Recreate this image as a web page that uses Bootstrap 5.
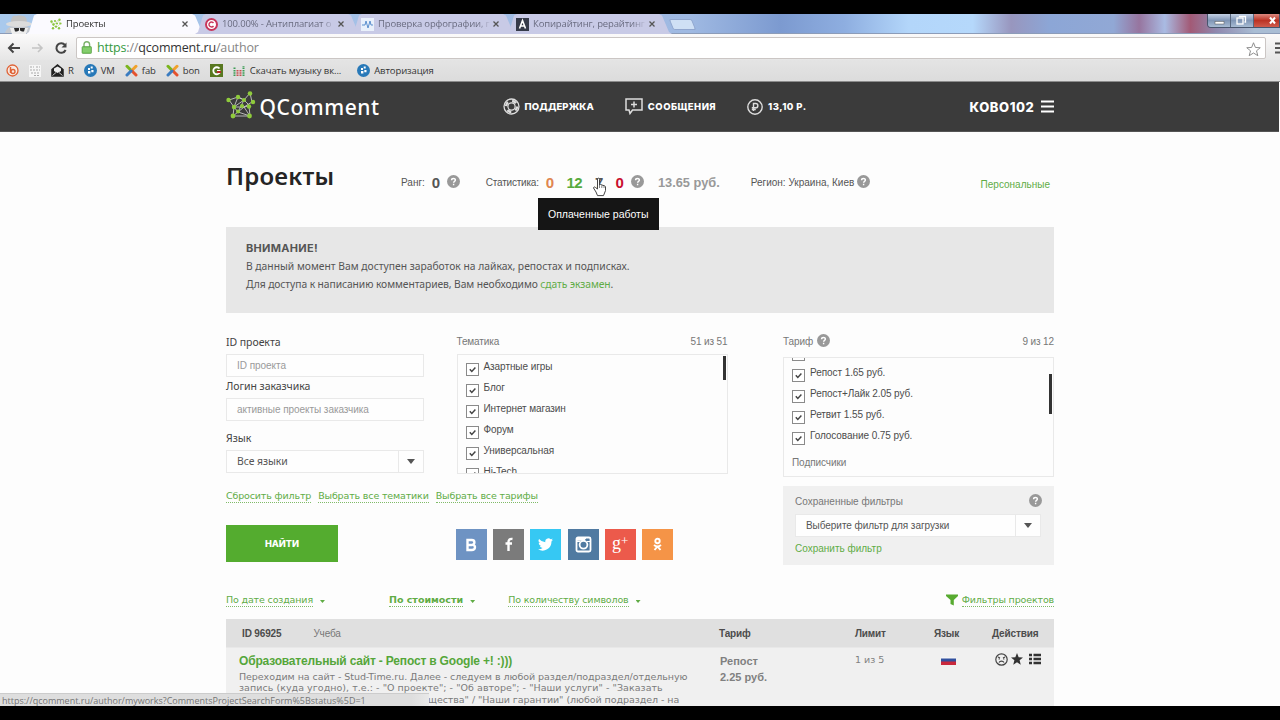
<!DOCTYPE html>
<html lang="ru">
<head>
<meta charset="utf-8">
<title>Проекты</title>
<meta name="viewport" content="width=device-width, initial-scale=1">
<link href="https://cdn.jsdelivr.net/npm/bootstrap@5.3.0/dist/css/bootstrap.min.css" rel="stylesheet">
<style>
body{width:1280px;height:720px;overflow:hidden;background:#000;font:10px/16px "Liberation Sans",sans-serif;color:#555;padding:14px 0}
svg{display:block;flex:none}
span,a,label,h1{white-space:nowrap}
a,a:hover{color:#60ac45;text-decoration:none}
.screen{height:692px;background:#fdfdfd;overflow:hidden}
.ui{font-family:"Open Sans","Noto Sans",sans-serif}
.wide{font-family:"DejaVu Sans",sans-serif;font-size:9.5px}
.geo{font-family:"Noto Sans",sans-serif}
.cap{font-family:Inter,sans-serif;font-weight:800}
/* browser chrome */
.strip{height:20px;background:linear-gradient(90deg,#a9c9ec 0,#9fb9e2 54%,#7c9ad0 61%,#8eaee0 66%,#b3d6fa 71%,#b5d8fb 76%,#9896be 79%,#8ca6d6 82%,#91a8d5 87%,#97759f 89%,#a9bbe3 91%,#a25a76 93%,#8f88ae 95%,#a9bdd4 98%);border-bottom:1px solid #8c9cb8}
.tabx{width:165px;height:20px;margin-left:-10px;padding:0 17px 0 10px;font-size:9.5px;letter-spacing:-.15px;line-height:20px;background:#c8cae6;color:#6a6c80;clip-path:polygon(0 100%,3px 90%,8px 8%,11px 0,calc(100% - 13px) 0,calc(100% - 10px) 8%,calc(100% - 3px) 90%,100% 100%)}
.tabx.t2,.tabx.t4{width:166px}
.tabx.on{width:179px;padding-left:20px;background:#fbfaff;color:#333}
.tabx span{width:113px;overflow:hidden;-webkit-mask-image:linear-gradient(90deg,#000 88%,transparent);mask-image:linear-gradient(90deg,#000 88%,transparent)}
.newtab{width:23px;height:11px;margin:5px 0 0 -1px;background:#cfe0f5;border:1px solid #91a7cf;border-radius:2px;transform:skewX(22deg)}
.winbtns{width:73px;height:14px;border:1px solid #47556d;border-top:0;border-radius:0 0 0 4px;overflow:hidden}
.winbtns div{width:23px;background:linear-gradient(#c3d0e3,#8096b6 50%,#a7bbd3);border-right:1px solid #58677f}
.winbtns div:last-child{width:27px;background:linear-gradient(#dc8a80,#bb3324 50%,#cf5b4c)}
.toolbar{height:26px;background:linear-gradient(#fbfafa,#e6e6e6);padding-left:7px}
.addr{width:1190px;height:22px;margin-top:3px;background:#fff;border:1px solid #cbc6c4;border-radius:2px;font-size:12.5px;letter-spacing:-.17px;line-height:19px;color:#858585}
.addr i{font-style:normal;color:#359a3d}
.addr em{font-style:normal;color:#333}
.marks{height:22px;background:linear-gradient(#e4e4e4,#dcdcdc);border-bottom:1px solid #8b8b8b;font-size:9.5px;letter-spacing:-.1px;line-height:21px;color:#333;padding-left:6px}
.marks svg{margin-left:10px}
.marks svg:first-child{margin-left:0}
.marks span{margin-left:4px}
/* site header */
.top{height:50px;background:#3b3b3b;color:#fff;border-bottom:1px solid #555;width:1279px}
.top>div{height:49px;width:828px}
.brand{font-size:21px;margin-left:4px;font-weight:500;letter-spacing:.55px}
.sign{margin-top:-3px}
.nav1{margin-left:123px}.nav2{margin-left:31px}
.navt{font-size:9.5px;margin-left:5px;letter-spacing:.1px}
.navt.sp{letter-spacing:.45px}
.user{font-size:13px;letter-spacing:.6px;margin-right:6px}
/* page */
.page{width:828px}
.headrow{height:95px}
.ttl{font-size:24px;line-height:30px;margin:29px 0 0;font-weight:600;color:#252525;letter-spacing:.2px;width:109px}
.stats{margin:41px 0 0 66px;height:20px;line-height:20px}
.stats svg{margin:2px 0 0 7.5px}
.stats .num{font-weight:700;font-size:15px;letter-spacing:-.5px;margin-left:7px}
.stats .num.n2{margin-left:12.8px}
.stats .sum{font-weight:700;font-size:12.8px;margin-left:14px;color:#999}
.st2{margin-left:25.5px;letter-spacing:-.2px}
.reg{margin-left:31px}
.stats .reg+svg{margin-left:2.5px}
.pers{margin:45px 4px 0 0}
.tip{left:312px;top:66px;width:121px;height:32px;line-height:32px;background:#151515;color:#fff;padding-left:10px;z-index:2;font-size:10.5px}
.hand{left:366px;top:44px;z-index:3}
.notice{height:86px;background:#e7e7e7;padding:12px 20px;line-height:18px;font-size:10.3px}
.notice b{font-weight:700;font-size:11px;letter-spacing:.3px}
.tight{letter-spacing:-.08px}
.filters{height:280px}
.lefta{width:557px}
.uprow{height:174px;padding-top:21px}
.col1{width:198px;margin-right:32.5px;color:#444;font-size:10.5px;letter-spacing:-.05px}
.col1 label{display:table;margin:0 0 4px}
.col1 label.l2{margin-top:1px}.col1 label.l3{margin-top:9px}
.field{width:198px;height:23px;border:1px solid #e9e9e9;background:#fefefe;padding:0 10px;line-height:21px;color:#9a9a9a;font:10px/21px "Liberation Sans",sans-serif;letter-spacing:-.05px}
.pick{padding-right:0;color:#555}
.col1 .pick{font-family:"Noto Sans",sans-serif;font-size:10.4px}
.wfull{width:246px;margin:4px 0}
.arrow{width:25px;border-left:1px solid #e9e9e9;display:flex;align-items:center;justify-content:center}
.arrow::before{content:"";border:4.5px solid transparent;border-top:5px solid #555;border-bottom:0}
.dn{width:5px;height:3px;margin:6px 0 0 7px;background:#60ac45;clip-path:polygon(0 0,100% 0,50% 100%)}
.cols{width:271px}
.cap-row{color:#777;letter-spacing:-.12px}
.listbox{width:271px;height:120px;border:1px solid #e9e9e9;overflow:hidden;position:relative;color:#4c4c4c;padding:0 8px;letter-spacing:-.07px}
.listbox .item{height:21px}
.bx{width:13px;height:13px;border:1px solid #8a8a8a;background:#fff;flex:none;margin:4px 5px 0 0}
.thumb{position:absolute;right:1px;top:1px;width:3px;height:24px;background:#333}
.thumb.th2{top:16px;height:40px}
.pull{margin-top:-14px}
.grp{display:table;margin-top:6px;color:#777}
.links{height:38px;padding-top:3px;gap:7px}
.lnk{border-bottom:1px dotted #7fbb68;line-height:12px;height:13px;letter-spacing:-.15px}
.find{width:112px;height:37px;border-radius:0;background:#54ac2f;border:0;color:#fff;font-size:9.2px;padding:0}
.socs{margin:4px 0 0 118px;gap:6.2px}
.soc{width:31px;height:31px;display:flex;align-items:center;justify-content:center}
.vk{background:#6e93c3}.fb{background:#7b7b7b}.tw{background:#36c8f3}.ig{background:#507aa1}.ok{background:#f59447}
.gp{background:#ec5a4b;color:#fff;font:18px/18px "Liberation Serif",serif}
.gp span{margin-top:-3px}
.gp sup{font-size:13px;top:-4px}
.saved{width:271px;height:79px;margin-top:9px;background:#f0f0f0;padding:8px 12px;color:#777}
.sort{height:26px;padding-top:1px}
.s2{margin-left:64px;letter-spacing:0}.s3{margin-left:33px}
.thead-x{height:29px;background:#e0e0e0;line-height:29px;font-weight:700;color:#4c4c4c;border-bottom:1px solid #e8e8e8;letter-spacing:-.15px}
.cat{margin-left:32px;font-weight:400;color:#777}
.grid{display:grid;grid-template-columns:493px 136px 79px 58px auto}
.rowx{height:58px;background:#f0f0f0;color:#808080}
.job{display:table;font-weight:700;font-size:12px;letter-spacing:-.18px;color:#55a63a}
.desc{line-height:11.5px;color:#7b7b7b;padding-top:1.5px;letter-spacing:-.06px}
.desc .d2{letter-spacing:.04px}
.desc .d3{margin-left:189px}
.price{padding:5px 1px;font-weight:700;font-size:11px}
.flag{margin:9px 0 0 7px}
.status{left:0;bottom:14px;width:429px;height:13px;background:linear-gradient(90deg,#dedede 96%,#e9e9e9);border-top:1px solid #ccc;font-size:9px;line-height:13px;color:#757575;padding-left:2px;z-index:3}
</style>
</head>
<body>
<svg width="0" height="0" class="position-absolute">
<symbol id="q" viewBox="0 0 13 13"><circle cx="6.500" cy="6.500" r="6.500" fill="#999"/><path d="M4.600 5.200C4.600 2.900 8.400 3 8.400 5.100 8.400 6.400 6.600 6.400 6.600 7.800M6.600 8.800v1.400" stroke="#fff" stroke-width="1.400" fill="none"/></symbol>
<symbol id="ck" viewBox="0 0 11 11"><path d="M2.800 5.300 4.800 7.400 8.400 3.600" fill="none" stroke="#444" stroke-width="1.500"/></symbol>
<symbol id="x" viewBox="0 0 6 6"><path d="M.5.5l5 5M5.500.5l-5 5" stroke="#555" stroke-width="1.300"/></symbol>
<symbol id="logo" viewBox="0 0 30 28"><g stroke="#d8d8d8" stroke-width=".8" fill="none"><path d="M3 9l9-3 6 3 6-7 2 9-8 5-6 5-4-5 10 0M3 9l5 7 4-10 6 3-10 7-1 9h17l-1-10-5 1 6 9M12 21l6-12 6 6M7 25l5-4 12 4"/></g><g fill="#8fcb3c"><circle cx="2.500" cy="9" r="2.200"/><circle cx="12" cy="6" r="2.200"/><circle cx="24" cy="2.500" r="2.300"/><circle cx="18" cy="9" r="2.100"/><circle cx="27" cy="11" r="2.200"/><circle cx="8" cy="16" r="2.200"/><circle cx="16" cy="15" r="2.100"/><circle cx="23" cy="15.500" r="2.200"/><circle cx="12" cy="20.500" r="2"/><circle cx="7" cy="25" r="2.400"/><circle cx="23.500" cy="25" r="2.400"/></g></symbol>
<symbol id="fav" viewBox="0 0 12 12"><path d="M1 4l4 2 3-4 2 4-4 4-3-3z" fill="none" stroke="#c9dfa5" stroke-width=".8"/><g fill="#8cc63f"><circle cx="1.500" cy="3.500" r="1.200"/><circle cx="5" cy="3" r="1.100"/><circle cx="9.500" cy="1.800" r="1.200"/><circle cx="7" cy="5.500" r="1.100"/><circle cx="10.500" cy="5.500" r="1.100"/><circle cx="3.500" cy="6.500" r="1.200"/><circle cx="3" cy="10.300" r="1.200"/><circle cx="6" cy="8.500" r="1.100"/><circle cx="9" cy="10.300" r="1.200"/></g></symbol>
<symbol id="vm" viewBox="0 0 13 13"><circle cx="6.500" cy="6.500" r="6.500" fill="#2879b8"/><path d="M4 4h2v2H4zM6.700 2.500h2v2h-2zM4 7h2.400v2.400H4zM7.300 6h2.200v2.200H7.300z" fill="#fff"/></symbol>
<symbol id="jm" viewBox="0 0 13 13"><g fill="none" stroke-width="3" stroke-linecap="round"><path d="M2 2.300l4 4" stroke="#7ab51d"/><path d="M11 2.300l-4 4" stroke="#f0a12a"/><path d="M11 11 7 7" stroke="#e5522d"/><path d="M2 11l4-4" stroke="#3b7cc0"/></g></symbol>
</svg>
<div class="screen">
<div class="strip ui d-flex">
<svg width="36" height="20" viewBox="0 0 36 20"><path d="M5 19c1-4 4-6 6-7h16c2 1 5 3 5 7z" fill="#c3c8cf"/><path d="M10 14h18l-2 6H12z" fill="#eee"/><path d="M11 9c0-7 3-8 5-7 2-1 4-1 7 0 3 0 4 3 4 7z" fill="#c3c3c3"/><ellipse cx="19" cy="10" rx="13" ry="3" fill="#dcdcdc"/><path d="M14 14h5v2.500l-2 1h-2zM20 14h5l-1 3.500h-2l-2-1z" fill="#2b2b2b"/></svg>
<div class="tabx on d-flex align-items-center"><svg width="12" height="12" class="me-1 ms-1"><use href="#fav"/></svg><span>Проекты</span><svg width="6" height="6" class="ms-auto"><use href="#x"/></svg></div>
<div class="tabx t2 d-flex align-items-center"><svg width="13" height="13" class="me-1"><circle cx="6.500" cy="6.500" r="5.500" fill="#fff" stroke="#c8375c" stroke-width="2"/><path d="M8.500 5a2.500 2.500 0 1 0 0 3" fill="none" stroke="#c8375c" stroke-width="1.400"/></svg><span>100.00% - Антиплагиат о</span><svg width="6" height="6" class="ms-auto"><use href="#x"/></svg></div>
<div class="tabx d-flex align-items-center"><svg width="13" height="13" class="me-1"><rect width="13" height="13" fill="#e9f0fb"/><path d="M1 7h3l1-4 2 7 2-7 1 4h2" fill="none" stroke="#5b8fce"/></svg><span>Проверка орфографии, г</span><svg width="6" height="6" class="ms-auto"><use href="#x"/></svg></div>
<div class="tabx t4 d-flex align-items-center"><svg width="13" height="13" class="me-1"><rect width="13" height="13" fill="#363b4a"/><path d="M3.500 10.500 6.500 2.500l3 8M4.500 8h4" fill="none" stroke="#fff" stroke-width="1.600"/></svg><span>Копирайтинг, рерайтинг</span><svg width="6" height="6" class="ms-auto"><use href="#x"/></svg></div>
<div class="newtab"></div>
<div class="winbtns d-flex ms-auto"><div><svg width="23" height="14"><rect x="7" y="7.500" width="9" height="2.500" fill="#fff" stroke="#555" stroke-width=".5"/></svg></div><div><svg width="22" height="14" fill="none" stroke="#fff" stroke-width="1.300"><path d="M8.500 3V2.500h6v5.500h-1"/><rect x="6" y="4" width="6" height="6"/></svg></div><div><svg width="26" height="14"><path d="M16 3.500l5 6M21 3.500l-5 6" stroke="#fff" stroke-width="2"/></svg></div></div>
</div>
<div class="toolbar ui d-flex">
<svg width="69" height="26" fill="none" stroke="#444" stroke-width="2"><path d="M13 14H2M6.500 9.500 2 14l4.500 4.500"/><path d="M25 14h10M31 10l4 4-4 4" stroke="#c4c4c4" stroke-width="1.600"/><path d="M58 11a4.800 4.800 0 1 0 .6 5"/><path d="M59.500 8.500v5h-5z" fill="#444" stroke="none"/></svg>
<div class="addr d-flex"><svg width="20" height="20"><path d="M7 9V6.500a2.800 2.800 0 0 1 5.600 0V9" fill="none" stroke="#7db26c" stroke-width="1.400"/><rect x="5" y="8.500" width="9.500" height="7" rx="1" fill="#74c45b" stroke="#559745" stroke-width=".6"/><path d="M6 11h7.500M6 13h7.500" stroke="#a5df90" stroke-width=".7"/></svg><span><i>https</i>://<em>qcomment.ru</em>/author</span><svg width="15" height="15" viewBox="0 0 16 16" class="ms-auto me-1 mt-1"><path d="M8 .8l2 5 5.200.3-4 3.300 1.400 5.200L8 11.700l-4.600 2.900 1.400-5.200-4-3.300L6 5.800z" fill="#fff" stroke="#888"/></svg></div>
<svg width="6" height="26" class="ms-auto"><path d="M1 9.500h6M1 14h6M1 18.500h6" stroke="#555" stroke-width="2.200"/></svg>
</div>
<div class="marks ui d-flex align-items-center">
<svg width="13" height="13"><circle cx="6.500" cy="6.500" r="5.500" fill="#f7e9e2" stroke="#df6235" stroke-width="1.300"/><path d="M4.500 3v6" stroke="#df6235" stroke-width="1.500"/><circle cx="7" cy="7.500" r="2" fill="none" stroke="#df6235" stroke-width="1.400"/></svg>
<svg width="12" height="12"><rect width="12" height="12" fill="#f6f6f6"/><path d="M1 2h4M7 2h4M1 5h10M2 8h8M5 10.500h6" stroke="#aaa" stroke-dasharray="2 1"/></svg>
<svg width="13" height="13"><path d="M1 5.500 6.500 1 12 5.500V12H1z" fill="#222" stroke="#222" stroke-width="1.500"/><path d="M3 4.500 6.500 2.500 10 4.500V7L6.500 9 3 7z" fill="#eee"/><path d="M1.500 11.500 5 8.500M11.500 11.500 8 8.500" stroke="#eee" stroke-width=".8"/></svg>
<span>R</span>
<svg width="13" height="13"><use href="#vm"/></svg><span>VM</span>
<svg width="13" height="13"><use href="#jm"/></svg><span>fab</span>
<svg width="13" height="13"><use href="#jm"/></svg><span>bon</span>
<svg width="13" height="13"><rect width="13" height="13" fill="#587820"/><path d="M9.500 4.500a3.500 3.500 0 1 0 0 4.500V7H7" fill="none" stroke="#fff" stroke-width="1.800"/><rect x="7" y="7" width="4" height="2" fill="#b42a2a"/></svg>
<svg width="13" height="11"><g fill="none" stroke-width="2" stroke-dasharray="1.500 .8"><path d="M1.500 11V2M10.500 11V1" stroke="#3c9d56"/><path d="M4.500 11V5M7.500 11V4" stroke="#c75050"/></g></svg>
<span>Скачать музыку вк...</span>
<svg width="13" height="13" class="ms-3"><use href="#vm"/></svg><span>Авторизация</span>
</div>
<div class="top"><div class="mx-auto d-flex align-items-center">
<svg width="30" height="28" class="sign"><use href="#logo"/></svg>
<span class="geo brand">QComment</span>
<svg width="17" height="17" class="nav1" fill="none" stroke="#ddd"><circle cx="8.500" cy="8.500" r="7.500" stroke-width="1.300"/><circle cx="8.500" cy="8.500" r="5.500" stroke-width="2.500" stroke-dasharray="4.300 4.340"/><circle cx="8.500" cy="8.500" r="3.600" stroke-width="1.200"/></svg>
<span class="cap navt">ПОДДЕРЖКА</span>
<svg width="18" height="17" class="nav2" fill="none" stroke="#ddd" stroke-width="1.500"><path d="M1 1h16v11H7.500L5 15.500 4 12H1zM9 3.500v6M6 6.500h6"/></svg>
<span class="cap navt sp">СООБЩЕНИЯ</span>
<svg width="16" height="16" class="nav2" fill="none" stroke="#ddd" stroke-width="1.400"><circle cx="8" cy="8" r="7.200"/><path d="M6.500 12V4.500h2.200a2 2 0 0 1 0 4.300H4.800M4.800 10.500h4"/></svg>
<span class="cap navt sp">13,10 Р.</span>
<span class="cap user ms-auto">КОВО102</span>
<svg width="13" height="13"><path d="M0 1.500h13M0 6.500h13M0 11.500h13" stroke="#fff" stroke-width="2.200"/></svg>
</div></div>
<main class="page mx-auto">
<div class="headrow position-relative d-flex">
<h1 class="geo ttl">Проекты</h1>
<div class="stats d-flex">
<span>Ранг:</span><span class="num">0</span><svg width="13" height="13"><use href="#q"/></svg>
<span class="st2">Статистика:</span><span class="num" style="color:#e08650">0</span><span class="num n2" style="color:#57aa3c">12</span><span class="num n2">7</span><span class="num n2" style="color:#c9102f">0</span><svg width="13" height="13"><use href="#q"/></svg>
<span class="sum">13.65 руб.</span>
<span class="reg">Регион: Украина, Киев</span><svg width="13" height="13"><use href="#q"/></svg>
</div>
<a href="#" class="ms-auto pers">Персональные</a>
<div class="tip position-absolute"><span>Оплаченные работы</span></div>
<svg class="hand position-absolute" width="16" height="21"><path d="M5.500 2.500c1-1 2 0 2 1V9l1-.5 1.500.5 1 .4 1.200.2 1.300 1v4l-2 5h-6L4 16l-2.500-4c0-1 1-1.500 2-.5l2 1.500z" fill="#fff" stroke="#444"/><path d="M7.500 9v3M9.800 9.500V12M12 10v2" stroke="#666" stroke-width=".8"/></svg>
</div>
<div class="notice geo"><b class="cap">ВНИМАНИЕ!</b><br><span>В данный момент Вам доступен заработок на лайках, репостах и подписках.</span><br><span class="tight">Для доступа к написанию комментариев, Вам необходимо <a href="#">сдать экзамен</a>.</span></div>
<div class="filters d-flex">
<div class="lefta">
<div class="d-flex uprow">
<div class="col1 geo"><label>ID проекта</label><div class="field"><span>ID проекта</span></div><label class="l2">Логин заказчика</label><div class="field"><span>активные проекты заказчика</span></div><label class="l3">Язык</label><div class="field pick d-flex"><span>Все языки</span><i class="arrow ms-auto"></i></div></div>
<div class="cols"><div class="d-flex justify-content-between cap-row mb-1"><span>Тематика</span><span>51 из 51</span></div>
<div class="listbox pt-1"><i class="thumb"></i>
<div class="item d-flex"><i class="bx"><svg width="11" height="11"><use href="#ck"/></svg></i><span>Азартные игры</span></div>
<div class="item d-flex"><i class="bx"><svg width="11" height="11"><use href="#ck"/></svg></i><span>Блог</span></div>
<div class="item d-flex"><i class="bx"><svg width="11" height="11"><use href="#ck"/></svg></i><span>Интернет магазин</span></div>
<div class="item d-flex"><i class="bx"><svg width="11" height="11"><use href="#ck"/></svg></i><span>Форум</span></div>
<div class="item d-flex"><i class="bx"><svg width="11" height="11"><use href="#ck"/></svg></i><span>Универсальная</span></div>
<div class="item d-flex"><i class="bx"><svg width="11" height="11"><use href="#ck"/></svg></i><span>Hi-Tech</span></div>
</div></div>
</div>
<div class="d-flex wide links"><a href="#" class="lnk">Сбросить фильтр</a><a href="#" class="lnk">Выбрать все тематики</a><a href="#" class="lnk">Выбрать все тарифы</a></div>
<div class="d-flex"><button class="btn find cap">НАЙТИ</button>
<div class="d-flex socs">
<div class="soc vk"><svg width="13" height="14"><path d="M2.500 2h4.300c3.400 0 3.300 4 .6 4.700 3.800.8 3.200 5.300-.6 5.300H2.500zM3 7h4.500" fill="none" stroke="#fff" stroke-width="2.400"/></svg></div>
<div class="soc fb"><svg width="10" height="15"><path d="M8.500 2C5.500 1.500 4.500 3 4.500 5v9M1.500 6.500h6.500" fill="none" stroke="#fff" stroke-width="2.400"/></svg></div>
<div class="soc tw"><svg width="15" height="13" viewBox="0 0 24 20"><path d="M24 2.400a10 10 0 0 1-2.800.8A5 5 0 0 0 23.300.5a10 10 0 0 1-3.100 1.200A4.900 4.900 0 0 0 11.800 6.200 14 14 0 0 1 1.700 1a4.900 4.900 0 0 0 1.500 6.600A5 5 0 0 1 1 7a4.900 4.900 0 0 0 4 4.900 5 5 0 0 1-2.300.1 4.900 4.900 0 0 0 4.600 3.400A10 10 0 0 1 0 17.500 14 14 0 0 0 21.500 5z" fill="#fff"/></svg></div>
<div class="soc ig"><svg width="17" height="17" fill="none" stroke="#fff" stroke-width="1.800"><rect x="1.500" y="1.500" width="14" height="14" rx="1.500"/><circle cx="8.500" cy="8.800" r="3.900"/><path d="M1 5.500h4M12 5.500h4" stroke-width="1.200"/><path d="M2 2.500h9M2 4h8" stroke-width="1.500"/></svg></div>
<div class="soc gp"><span>g</span><sup>+</sup></div>
<div class="soc ok"><svg width="11" height="15" fill="none" stroke="#fff" stroke-width="1.900"><circle cx="5.500" cy="4" r="2.200"/><path d="M2 8c2 1.700 5 1.700 7 0M5.500 9.300 2.500 13M5.500 9.300l3 3.700"/></svg></div>
</div></div>
</div>
<div class="cols"><div class="d-flex cap-row" style="height:44px;padding-top:21px"><span>Тариф</span><svg width="13" height="13" class="ms-1"><use href="#q"/></svg><span class="ms-auto">9 из 12</span></div>
<div class="listbox"><i class="thumb th2"></i>
<div class="item d-flex pull"><i class="bx"></i></div>
<div class="item d-flex"><i class="bx"><svg width="11" height="11"><use href="#ck"/></svg></i><span>Репост 1.65 руб.</span></div>
<div class="item d-flex"><i class="bx"><svg width="11" height="11"><use href="#ck"/></svg></i><span>Репост+Лайк 2.05 руб.</span></div>
<div class="item d-flex"><i class="bx"><svg width="11" height="11"><use href="#ck"/></svg></i><span>Ретвит 1.55 руб.</span></div>
<div class="item d-flex"><i class="bx"><svg width="11" height="11"><use href="#ck"/></svg></i><span>Голосование 0.75 руб.</span></div>
<span class="grp">Подписчики</span>
</div>
<div class="saved"><div class="d-flex justify-content-between"><span>Сохраненные фильтры</span><svg width="13" height="13"><use href="#q"/></svg></div>
<div class="field pick wfull d-flex"><span>Выберите фильтр для загрузки</span><i class="arrow ms-auto"></i></div><a href="#">Сохранить фильтр</a></div>
</div>
</div>
<div class="d-flex wide sort"><a href="#" class="lnk">По дате создания</a><i class="dn"></i><a href="#" class="lnk fw-bold s2">По стоимости</a><i class="dn"></i><a href="#" class="lnk s3">По количеству символов</a><i class="dn"></i><svg width="12" height="12" class="ms-auto me-1"><path d="M0 .5h12v1.500L7.800 6v5.500L4.500 10V6L0 2z" fill="#57aa30"/></svg><a href="#" class="lnk">Фильтры проектов</a></div>
<div class="thead-x grid"><div class="d-flex ps-3"><span>ID 96925</span><span class="cat">Учеба</span></div><span>Тариф</span><span>Лимит</span><span>Язык</span><span>Действия</span></div>
<div class="rowx grid"><div style="padding:5px 0 0 13px"><a href="#" class="job">Образовательный сайт - Репост в Google +! :)))</a><div class="desc wide"><span>Переходим на сайт - Stud-Time.ru. Далее - следуем в любой раздел/подраздел/отдельную</span><br><span class="d2">запись (куда угодно), т.е.: - "О проекте"; - "Об авторе"; - "Наши услуги" - "Заказать</span><br><span class="d3">щества" / "Наши гарантии" (любой подраздел - на</span></div></div>
<div class="price">Репост<br>2.25 руб.</div><span class="wide p-1 ps-0">1 из 5</span>
<svg width="15" height="8" class="flag"><path fill="#f5f5f5" d="M0 0h15v3H0z"/><path fill="#31509e" d="M0 1.500h15V5H0z"/><path fill="#c8283c" d="M0 4.500h15V8H0z"/></svg>
<div class="d-flex" style="padding:5px 0 0 3px"><svg width="13" height="13" fill="none" stroke="#444" stroke-width="1.200"><circle cx="6.500" cy="6.500" r="5.700"/><path d="M4 9.500c1-1.800 4-1.800 5 0M3 4l2 1M10 4 8 5M4.200 5.500v1M8.800 5.500v1"/></svg><svg width="12" height="12" viewBox="0 0 16 16" style="margin-left:3px"><path d="M8 0l2.200 5.500 5.800.4-4.500 3.800L13 15.500 8 12.300 3 15.500l1.500-5.800L0 5.900l5.800-.4z" fill="#333"/></svg><svg width="12" height="12" style="margin-left:6px"><path d="M0 2h3M4.500 2H12M0 6h3M4.500 6H12M0 10h3M4.500 10H12" stroke="#333" stroke-width="2.700"/></svg></div></div>
</main>
</div>
<div class="status ui position-absolute"><span>https://qcomment.ru/author/myworks?CommentsProjectSearchForm%5Bstatus%5D=1</span></div>
<script src="https://cdn.jsdelivr.net/npm/bootstrap@5.3.0/dist/js/bootstrap.bundle.min.js"></script>
</body>
</html>
